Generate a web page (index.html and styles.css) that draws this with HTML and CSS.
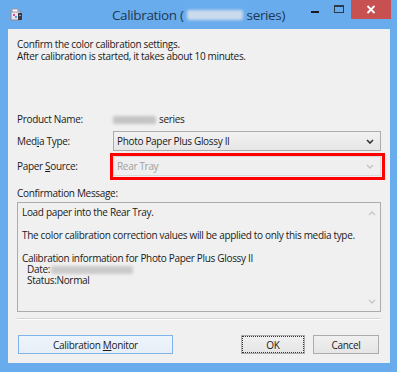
FILE: index.html
```html
<!DOCTYPE html>
<html>
<head>
<meta charset="utf-8">
<link rel="stylesheet" href="styles.css">
</head>
<body>
<div class="window">
  <div class="titlebar">
    <div class="tb-left">
      <svg class="app-icon" width="13" height="13" viewBox="0 0 13 13">
        <rect x="1" y="3" width="9" height="9" fill="#e8e2ea" stroke="#8a8a96" stroke-width="1"/>
        <rect x="2" y="1" width="6" height="3" fill="#ffffff" stroke="#9a9aa6" stroke-width="1"/>
        <rect x="3" y="6" width="2" height="2" fill="#d84aa8"/>
        <rect x="5" y="8" width="2" height="2" fill="#5aa0e0"/>
        <rect x="8" y="5" width="4" height="7" fill="#3a3a44"/>
        <rect x="9" y="7" width="2" height="1" fill="#9a9aa6"/>
      </svg>
    </div>
    <div class="title"><span>Calibration (</span><span class="blur blur-title"></span><span>series)</span></div>
    <div class="tb-right">
      <div class="ctl ctl-min"><span class="min-bar"></span></div>
      <div class="ctl ctl-max"><span class="max-box"></span></div>
      <div class="ctl ctl-close">
        <svg width="10" height="9" viewBox="0 0 10 9"><path d="M1.5 1 L8.5 8 M8.5 1 L1.5 8" stroke="#ffffff" stroke-width="1.8"/></svg>
      </div>
    </div>
  </div>
  <div class="client">
    <p class="intro">Confirm the color calibration settings.<br>After calibration is started, it takes about 10 minutes.</p>
    <div class="form">
      <div class="label">Product Name:</div>
      <div class="value"><span class="blur blur-name"></span>series</div>
      <div class="label">Med<u>i</u>a Type:</div>
      <div class="combo"><span class="combo-text">Photo Paper Plus Glossy II</span>
        <svg class="chev" width="8" height="5" viewBox="0 0 8 5"><path d="M1 1 L4 4 L7 1" fill="none" stroke="#333" stroke-width="1.6"/></svg>
      </div>
      <div class="label">Paper <u>S</u>ource:</div>
      <div class="combo combo-disabled"><span class="combo-text">Rear Tray</span>
        <svg class="chev" width="8" height="5" viewBox="0 0 8 5"><path d="M1 1 L4 4 L7 1" fill="none" stroke="#c4c4c4" stroke-width="1.4"/></svg>
        <span class="highlight"></span>
      </div>
    </div>
    <div class="msg-label">Confirmation Message:</div>
    <div class="msgbox">
      <div class="msg-text">
        <div class="line">Load paper into the Rear Tray.</div>
        <div class="line blank"></div>
        <div class="line">The color calibration correction values will be applied to only this media type.</div>
        <div class="line blank"></div>
        <div class="line">Calibration information for Photo Paper Plus Glossy II</div>
        <div class="line indent"><span>Date:</span><span class="blur blur-date"></span></div>
        <div class="line indent">Status:Normal</div>
      </div>
      <div class="scrollbar">
        <svg width="8" height="5" viewBox="0 0 8 5"><path d="M1 4 L4 1 L7 4" fill="none" stroke="#c6c6c6" stroke-width="1.3"/></svg>
        <svg width="8" height="5" viewBox="0 0 8 5"><path d="M1 1 L4 4 L7 1" fill="none" stroke="#c6c6c6" stroke-width="1.3"/></svg>
      </div>
    </div>
    <div class="sep"></div>
    <div class="buttons">
      <div class="btn btn-monitor"><span>Calibration <u>M</u>onitor</span></div>
      <div class="btn-group">
        <div class="btn btn-ok"><span>OK</span></div>
        <div class="btn btn-cancel"><span>Cancel</span></div>
      </div>
    </div>
  </div>
</div>
</body>
</html>
```
FILE: styles.css
```css
* { box-sizing: border-box; }
body { margin: 0; background: #fff; }
.window {
  width: 397px; height: 372px;
  background: #69acee;
  display: flex; flex-direction: column;
  font-family: "Open Sans", "Noto Sans", sans-serif;
  font-size: 10px;
  letter-spacing: -0.32px;
  color: #1a1a1a;
}
.titlebar {
  height: 29px;
  display: grid;
  grid-template-columns: 1fr auto 1fr;
  align-items: start;
}
.tb-left { padding: 8px 0 0 10px; }
.app-icon { display: block; }
.title {
  padding-top: 6px;
  font-size: 13.5px;
  letter-spacing: -0.35px;
  color: #22384e;
  line-height: 18px;
  white-space: nowrap;
  display: flex; align-items: center;
}
.tb-right { display: flex; justify-content: flex-end; margin-right: 6px; }
.ctl { height: 19px; display: flex; align-items: center; justify-content: center; }
.ctl-min { width: 24px; }
.ctl-max { width: 24px; }
.ctl-close { width: 40px; background: #c75050; }
.min-bar { width: 8px; height: 2px; background: #1b1b1b; margin-top: 5px; }
.max-box { width: 10px; height: 8px; border: 1px solid #2a3a4a; border-top-width: 2px; margin-top: -2px; }
.blur { display: inline-block; filter: blur(1.6px); border-radius: 2px; }
.blur-title { width: 56px; height: 10px; background: #cbdbec; margin: 0 4px 0 3px; }
.blur-name { width: 43px; height: 8px; background: #c4c4c4; margin-right: 3px; vertical-align: -1px; }
.blur-date { width: 82px; height: 8px; background: #cacaca; margin-left: 1px; vertical-align: -1px; }

.client {
  flex: 1;
  margin: 0 7px 9px 8px;
  background: #f0f0f0;
  padding: 9px 9px 0 9px;
  display: flex; flex-direction: column;
}
.intro { margin: 0; line-height: 12px; white-space: nowrap; }
.form {
  margin-top: 50px;
  display: grid;
  grid-template-columns: 96px 1fr;
  grid-template-rows: 14px 20px 20px;
  row-gap: 5px;
  align-items: center;
}
.label, .value { line-height: 14px; white-space: nowrap; }
.combo {
  position: relative;
  height: 20px;
  border: 1px solid #acacac;
  background: linear-gradient(#f2f2f2, #e6e6e6);
  display: flex; align-items: center; justify-content: space-between;
  padding: 0 6px 0 3px;
}
.combo-disabled { background: #efefef; border-color: #d9d9d9; color: #a0a0a0; }
.chev { display: block; }
.highlight {
  position: absolute;
  top: -4px; left: -4px; right: -5px; bottom: -5px;
  border: 3px solid #ff0000;
}
.msg-label { margin-top: 11px; line-height: 12px; }
.msgbox {
  margin-top: 3px;
  height: 110px;
  border: 1px solid #acacac;
  background: #f0f0f0;
  display: flex;
}
.msg-text { flex: 1; padding: 4px 4px; }
.line { height: 11.4px; line-height: 11.4px; white-space: nowrap; }
.line.long { letter-spacing: -0.45px; }
.indent { padding-left: 5px; }
.scrollbar {
  width: 17px;
  display: flex; flex-direction: column; justify-content: space-between; align-items: center;
  padding: 8px 0 7px 0;
}
.scrollbar svg { display: block; }
.sep {
  margin-top: 6px;
  height: 2px;
  border-top: 1px solid #d5d5d5;
  border-bottom: 1px solid #ffffff;
}
.buttons {
  margin-top: 15px;
  display: flex; justify-content: space-between;
  padding: 0 2px 0 1px;
}
.btn-group { display: flex; gap: 8px; }
.btn {
  height: 19px;
  border: 1px solid #acacac;
  background: linear-gradient(#f0f0f0, #e5e5e5);
  display: flex; align-items: center; justify-content: center;
  line-height: 12px;
  white-space: nowrap;
}
.btn-monitor { width: 155px; border-color: #7eb4ea; background: linear-gradient(#eef4fb, #e6eef7); }
.btn-ok { width: 64px; outline: 1px dotted #333; outline-offset: -2px; }
.btn-cancel { width: 66px; }
u { text-decoration-thickness: 1px; text-underline-offset: 1px; }
```
